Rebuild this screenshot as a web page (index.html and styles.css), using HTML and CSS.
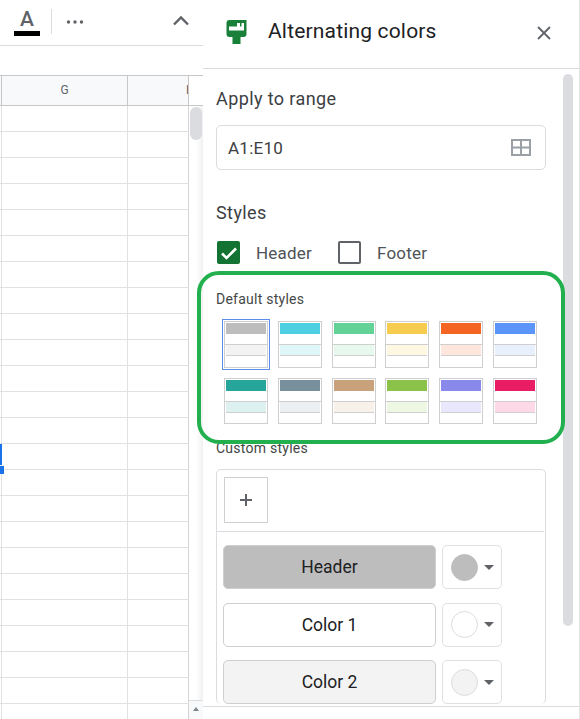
FILE: index.html
```html
<!DOCTYPE html>
<html lang="en">
<head>
<meta charset="utf-8">
<title>Alternating colors</title>
<link rel="stylesheet" href="styles.css">
</head>
<body>
<div class="app">
  <section class="sheet">
    <div class="toolbar">
      <div class="text-color"><span class="text-color-a">A</span><span class="text-color-bar"></span></div>
      <span class="tool-sep"></span>
      <svg class="dots" width="18" height="4" viewBox="0 0 18 4"><circle cx="2.5" cy="2" r="1.7"/><circle cx="9" cy="2" r="1.7"/><circle cx="15.5" cy="2" r="1.7"/></svg>
      <svg class="chevron" width="16" height="11" viewBox="0 0 16 11"><path d="M1 9.500 8 2.500l7 7" fill="none" stroke="#5f6368" stroke-width="2.400"/></svg>
    </div>
    <div class="formula-gap"></div>
    <div class="col-head">
      <div class="head-cell head-f"></div>
      <div class="head-cell head-g">G</div>
      <div class="head-cell head-h">H</div>
      <div class="head-corner"></div>
    </div>
    <div class="grid-area">
      <div class="grid">
        <div class="row"></div><div class="row"></div><div class="row"></div><div class="row"></div>
        <div class="row"></div><div class="row"></div><div class="row"></div><div class="row"></div>
        <div class="row"></div><div class="row"></div><div class="row"></div><div class="row"></div>
        <div class="row"></div><div class="row"></div><div class="row"></div><div class="row"></div>
        <div class="row"></div><div class="row"></div><div class="row"></div><div class="row"></div>
        <div class="row"></div><div class="row"></div><div class="row"></div><div class="row"></div>
        <span class="sel-edge"></span><span class="sel-handle"></span>
      </div>
      <div class="vscroll">
        <div class="vthumb"></div>
        <div class="vspace"></div>
        <div class="vbutton"><span class="vtri"></span></div>
      </div>
    </div>
  </section>

  <aside class="panel">
    <header class="panel-head">
      <svg class="brush" width="21" height="24" viewBox="0 0 21 24">
        <path fill="#188038" d="M3 0H20.500V14a3 3 0 0 1-3 3H14.500v7H6.500v-7H3.500a3 3 0 0 1-3-3V3a3 3 0 0 1 3-3z"/>
        <path fill="#fff" d="M3 6.500h8V3h3v3.500h1.500V3H18v7.500H3z"/>
      </svg>
      <h1 class="panel-title">Alternating colors</h1>
      <svg class="close" width="14" height="14" viewBox="0 0 14 14"><path d="M1 1l12 12M13 1 1 13" stroke="#5f6368" stroke-width="1.800" fill="none"/></svg>
    </header>
    <div class="panel-body">
      <div class="panel-content">
        <div class="label label-range">Apply to range</div>
        <div class="range-input">
          <span>A1:E10</span>
          <svg width="20" height="17" viewBox="0 0 20 17"><path fill="none" stroke="#9aa0a6" stroke-width="2" d="M1 1h18v15H1zM10 1v15M1 8.500h18"/></svg>
        </div>
        <div class="label label-styles">Styles</div>
        <div class="checks">
          <span class="box box-on"><svg width="22" height="22" viewBox="0 0 22 22"><path d="M4 11.500l4.500 4.500L18 6.500" fill="none" stroke="#fff" stroke-width="2.600"/></svg></span>
          <span class="check-label check-header">Header</span>
          <span class="box"></span>
          <span class="check-label">Footer</span>
        </div>
        <div class="small-label label-default">Default styles</div>
        <div class="swatches">
          <div class="swatch selected s-grey"><i></i><i></i><i></i><i></i></div>
          <div class="swatch s-cyan"><i></i><i></i><i></i><i></i></div>
          <div class="swatch s-green"><i></i><i></i><i></i><i></i></div>
          <div class="swatch s-yellow"><i></i><i></i><i></i><i></i></div>
          <div class="swatch s-orange"><i></i><i></i><i></i><i></i></div>
          <div class="swatch s-blue"><i></i><i></i><i></i><i></i></div>
          <div class="swatch s-teal"><i></i><i></i><i></i><i></i></div>
          <div class="swatch s-slate"><i></i><i></i><i></i><i></i></div>
          <div class="swatch s-tan"><i></i><i></i><i></i><i></i></div>
          <div class="swatch s-lime"><i></i><i></i><i></i><i></i></div>
          <div class="swatch s-violet"><i></i><i></i><i></i><i></i></div>
          <div class="swatch s-pink"><i></i><i></i><i></i><i></i></div>
        </div>
        <div class="small-label label-custom">Custom styles</div>
        <div class="custom-box">
          <div class="add-row">
            <div class="add-btn"><svg width="14" height="14" viewBox="0 0 14 14"><path d="M7 1v12M1 7h12" stroke="#5f6368" stroke-width="2"/></svg></div>
          </div>
          <div class="color-rows">
            <div class="color-row">
              <div class="color-name c-header">Header</div>
              <div class="color-pick"><span class="dot c-header"></span><span class="caret"></span></div>
            </div>
            <div class="color-row">
              <div class="color-name c-one">Color 1</div>
              <div class="color-pick"><span class="dot c-one"></span><span class="caret"></span></div>
            </div>
            <div class="color-row">
              <div class="color-name c-two">Color 2</div>
              <div class="color-pick"><span class="dot c-two"></span><span class="caret"></span></div>
            </div>
          </div>
        </div>
      </div>
      <div class="pscroll"><div class="pthumb"></div></div>
    </div>
    <div class="panel-foot"></div>
  </aside>
  <div class="highlight"></div>
</div>
</body>
</html>
```
FILE: styles.css
```css
* { box-sizing: border-box; }
html, body { margin: 0; height: 100%; overflow: hidden; background: #fff; }
body { font-family: Roboto, "Liberation Sans", sans-serif; color: #3c4043; }
.app { position: relative; display: flex; width: 580px; height: 719px; overflow: hidden; }

.sheet { width: 203px; flex: none; display: flex; flex-direction: column; height: 719px; }
.toolbar { height: 46px; flex: none; border-bottom: 1px solid #dadce0; display: flex; align-items: flex-start; position: relative; }
.text-color { width: 26px; margin-left: 14px; display: flex; flex-direction: column; align-items: center; }
.text-color-a { font: 500 21px/21px Roboto, sans-serif; height: 31px; padding-top: 9px; color: #5f6368; }
.text-color-bar { width: 26px; height: 5px; background: #000; }
.tool-sep { width: 1px; height: 25px; margin: 9px 0 0 11px; background: #dadce0; }
.dots { margin: 20px 0 0 14px; fill: #5f6368; }
.chevron { margin: 15px 0 0 89px; }
.formula-gap { height: 29px; flex: none; }

.col-head { height: 31px; flex: none; display: flex; border-top: 1px solid #c7c7c7; border-bottom: 1px solid #c7c7c7; }
.head-cell { background: #f8f9fa; border-right: 1px solid #c7c7c7; font: 12px/29px Roboto, sans-serif; color: #5f6368; text-align: center; overflow: hidden; }
.head-f { width: 2px; }
.head-g { width: 126px; }
.head-h { width: 61px; white-space: nowrap; text-indent: 58px; text-align: left; }
.head-corner { width: 14px; background: #fff; }

.grid-area { flex: 1; display: flex; min-height: 0; }
.grid { position: relative; width: 189px; flex: none; overflow: hidden; background:
  linear-gradient(#e1e1e1, #e1e1e1) 1px 0/1px 100% no-repeat,
  linear-gradient(#e1e1e1, #e1e1e1) 127px 0/1px 100% no-repeat,
  linear-gradient(#d4d4d4, #d4d4d4) 188px 0/1px 100% no-repeat; }
.row { height: 26px; border-bottom: 1px solid #e1e1e1; }
.sel-edge { position: absolute; left: 0; top: 338px; width: 2px; height: 21px; background: #1a73e8; }
.sel-handle { position: absolute; left: 0; top: 360px; width: 4px; height: 8px; background: #1a73e8; }

.vscroll { flex: 1; display: flex; flex-direction: column; background: linear-gradient(to right, #fff 50%, #f1f1f1 100%); }
.vthumb { width: 12px; height: 33px; margin: 1px 0 0 1px; border-radius: 6px; background: #dadce0; }
.vspace { flex: 1; }
.vbutton { height: 19px; border-top: 1px solid #dadce0; background: #f8f9fa; display: flex; justify-content: center; padding-top: 6px; }
.vtri { width: 0; height: 0; border: 3.500px solid transparent; border-top: 0; border-bottom: 4px solid #80868b; }

.panel { width: 377px; flex: none; height: 719px; display: flex; flex-direction: column; background: #fff; border-right: 1px solid #e4e4e4; }
.panel-head { height: 69px; flex: none; border-bottom: 1px solid #dadce0; display: flex; align-items: flex-start; padding-left: 23px; }
.brush { margin-top: 20px; flex: none; }
.panel-title { margin: 20px 0 0 21px; width: 269px; font: 400 21px/22px Roboto, sans-serif; letter-spacing: 0.17px; color: #202124; }
.close { margin-top: 26px; flex: none; }

.panel-body { flex: 1; min-height: 0; display: flex; overflow: hidden; }
.panel-content { width: 343px; padding-left: 13px; flex: none; }
.label { font: 400 18px/20px Roboto, sans-serif; letter-spacing: 0.4px; color: #3c4043; }
.label-range { margin-top: 20px; }
.range-input { margin-top: 16px; width: 330px; height: 45px; border: 1px solid #dadce0; border-radius: 5px; display: flex; align-items: center; justify-content: space-between; padding: 0 14px 0 11px; font-size: 17px; letter-spacing: 0.25px; line-height: 22px; }
.label-styles { margin-top: 33px; }
.checks { margin-top: 18px; margin-left: 1px; display: flex; align-items: center; height: 23px; }
.box { width: 23px; height: 23px; flex: none; border: 2px solid #5f6368; border-radius: 2px; display: block; }
.box-on { background: #137333; border: 0; padding: 1px 0 0 1px; }
.box-on svg { display: block; }
.check-label { margin-left: 16px; padding-top: 2px; font-size: 17px; line-height: 23px; letter-spacing: 0.2px; color: #4f5256; }
.check-header { width: 82px; flex: none; }

.small-label { font: 400 14px/18px Roboto, sans-serif; letter-spacing: 0.25px; color: #444746; }
.label-default { margin-top: 26px; }
.swatches { margin: 13px 0 0 8px; display: grid; grid-template-columns: repeat(6, 44px); column-gap: 9.800px; row-gap: 10px; }
.swatch { height: 46.500px; border: 1.300px solid #cfcfcf; padding: 0 1px; display: grid; grid-template-rows: 12px 11px 11px 1fr; position: relative; }
.swatch i { display: block; border-bottom: 1px solid #cfcfcf; margin: 0 -1px; }
.swatch i:nth-child(1) { margin: 1px 0 0; border-bottom: 0; }
.swatch i:nth-child(3) { margin: 0; }
.swatch i:nth-child(4) { border-bottom: 0; }
.selected { outline: 1.300px solid #5b8def; outline-offset: 1px; }
.s-grey i:nth-child(1) { background: #bdbdbd; } .s-grey i:nth-child(3) { background: #f3f3f3; }
.s-cyan i:nth-child(1) { background: #4dd0e1; } .s-cyan i:nth-child(3) { background: #e0f7fa; }
.s-green i:nth-child(1) { background: #63d297; } .s-green i:nth-child(3) { background: #e7f9ef; }
.s-yellow i:nth-child(1) { background: #f7cb4d; } .s-yellow i:nth-child(3) { background: #fef8e3; }
.s-orange i:nth-child(1) { background: #f46524; } .s-orange i:nth-child(3) { background: #ffe6dd; }
.s-blue i:nth-child(1) { background: #5b95f9; } .s-blue i:nth-child(3) { background: #e8f0fe; }
.s-teal i:nth-child(1) { background: #26a69a; } .s-teal i:nth-child(3) { background: #ddf2f0; }
.s-slate i:nth-child(1) { background: #78909c; } .s-slate i:nth-child(3) { background: #ebeff1; }
.s-tan i:nth-child(1) { background: #c9a27b; } .s-tan i:nth-child(3) { background: #f8f1ea; }
.s-lime i:nth-child(1) { background: #8bc34a; } .s-lime i:nth-child(3) { background: #eef7e3; }
.s-violet i:nth-child(1) { background: #8989eb; } .s-violet i:nth-child(3) { background: #e8e7fc; }
.s-pink i:nth-child(1) { background: #e91d63; } .s-pink i:nth-child(3) { background: #fdd8e6; }

.label-custom { margin-top: 15px; }
.custom-box { margin-top: 12px; width: 330px; border: 1px solid #dadce0; border-radius: 5px; border-bottom: 0; }
.add-row { height: 62px; border-bottom: 1px solid #dadce0; padding: 7px; margin-right: 1px; }
.add-btn { width: 44px; height: 46px; border: 1px solid #cfcfcf; display: flex; align-items: center; justify-content: center; }
.color-rows { padding: 13px 6px 0; display: flex; flex-direction: column; gap: 13.500px; }
.color-row { display: flex; gap: 6px; }
.color-name { width: 213px; height: 44px; border: 1px solid #cfcfcf; border-radius: 5px; font: 17.500px/42px Roboto, sans-serif; color: #202124; text-align: center; }
.c-header { background: #bdbdbd; }
.c-one { background: #fff; }
.c-two { background: #f3f3f3; }
.color-pick { width: 60px; height: 44px; border: 1px solid #e0e0e0; border-radius: 5px; display: flex; align-items: center; padding-left: 8px; }
.dot { width: 27px; height: 27px; border-radius: 50%; border: 1px solid #dadce0; }
.dot.c-header { border-color: #bdbdbd; }
.caret { width: 0; height: 0; margin-left: 6px; border: 5px solid transparent; border-bottom: 0; border-top: 5px solid #5f6368; }

.pscroll { flex: 1; padding: 5px 0 0 17px; }
.pthumb { width: 10px; height: 552px; border-radius: 5px; background: #dadce0; }
.panel-foot { height: 13px; flex: none; border-top: 1px solid #dadce0; }

.highlight { position: absolute; left: 197px; top: 271px; width: 368px; height: 173px; border: 4.500px solid #22b04f; border-radius: 22px; }
```
